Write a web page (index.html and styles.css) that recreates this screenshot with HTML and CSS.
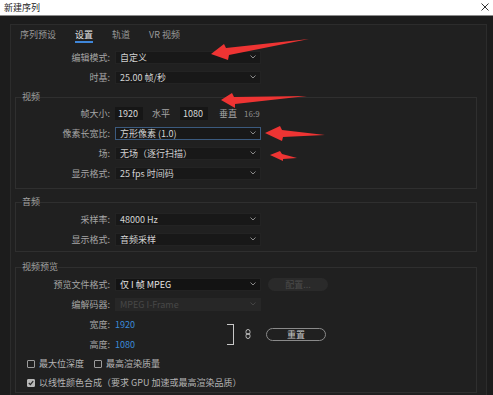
FILE: index.html
```html
<!DOCTYPE html>
<html lang="zh">
<head>
<meta charset="UTF-8">
<title>新建序列</title>
<link rel="stylesheet" href="styles.css">
</head>
<body>

<div class="titlebar">
  <span class="title">新建序列</span>
  <svg class="close" width="8" height="8" viewBox="0 0 8 8"><path d="M0.5 0.5 L7.5 7.5 M7.5 0.5 L0.5 7.5" stroke="#333" stroke-width="1" fill="none"/></svg>
</div>

<div class="dialog">
  <div class="panel">
    <div class="tabs">
      <span class="tab">序列预设</span>
      <span class="tab active">设置</span>
      <span class="tab">轨道</span>
      <span class="tab">VR 视频</span>
    </div>

    <div class="row">
      <span class="lbl">编辑模式:</span>
      <div class="select"><span>自定义</span><svg class="chev" width="6" height="4" viewBox="0 0 6 4"><path d="M0.5 0.5 L3 3 L5.5 0.5" stroke="#8a8a8a" fill="none"/></svg></div>
    </div>
    <div class="row">
      <span class="lbl">时基:</span>
      <div class="select"><span>25.00 帧/秒</span><svg class="chev" width="6" height="4" viewBox="0 0 6 4"><path d="M0.5 0.5 L3 3 L5.5 0.5" stroke="#8a8a8a" fill="none"/></svg></div>
    </div>

    <fieldset>
      <legend>视频</legend>
      <div class="row">
        <span class="lbl">帧大小:</span>
        <span class="num">1920</span>
        <span class="unit first">水平</span>
        <span class="num">1080</span>
        <span class="unit">垂直</span>
        <span class="ratio">16:9</span>
      </div>
      <div class="row">
        <span class="lbl">像素长宽比:</span>
        <div class="select focus"><span>方形像素 (1.0)</span><svg class="chev" width="6" height="4" viewBox="0 0 6 4"><path d="M0.5 0.5 L3 3 L5.5 0.5" stroke="#8a8a8a" fill="none"/></svg></div>
      </div>
      <div class="row">
        <span class="lbl">场:</span>
        <div class="select"><span>无场（逐行扫描）</span><svg class="chev" width="6" height="4" viewBox="0 0 6 4"><path d="M0.5 0.5 L3 3 L5.5 0.5" stroke="#8a8a8a" fill="none"/></svg></div>
      </div>
      <div class="row">
        <span class="lbl">显示格式:</span>
        <div class="select"><span>25 fps 时间码</span><svg class="chev" width="6" height="4" viewBox="0 0 6 4"><path d="M0.5 0.5 L3 3 L5.5 0.5" stroke="#8a8a8a" fill="none"/></svg></div>
      </div>
    </fieldset>

    <fieldset class="audio">
      <legend>音频</legend>
      <div class="row">
        <span class="lbl">采样率:</span>
        <div class="select"><span>48000 Hz</span><svg class="chev" width="6" height="4" viewBox="0 0 6 4"><path d="M0.5 0.5 L3 3 L5.5 0.5" stroke="#8a8a8a" fill="none"/></svg></div>
      </div>
      <div class="row">
        <span class="lbl">显示格式:</span>
        <div class="select"><span>音频采样</span><svg class="chev" width="6" height="4" viewBox="0 0 6 4"><path d="M0.5 0.5 L3 3 L5.5 0.5" stroke="#8a8a8a" fill="none"/></svg></div>
      </div>
    </fieldset>

    <fieldset class="preview">
      <legend>视频预览</legend>
      <div class="row">
        <span class="lbl">预览文件格式:</span>
        <div class="select dark"><span>仅 I 帧 MPEG</span><svg class="chev" width="6" height="4" viewBox="0 0 6 4"><path d="M0.5 0.5 L3 3 L5.5 0.5" stroke="#8a8a8a" fill="none"/></svg></div>
        <span class="btn disabled">配置...</span>
      </div>
      <div class="row">
        <span class="lbl">编解码器:</span>
        <div class="select disabled"><span>MPEG I-Frame</span><svg class="chev" width="6" height="4" viewBox="0 0 6 4"><path d="M0.5 0.5 L3 3 L5.5 0.5" stroke="#444" fill="none"/></svg></div>
      </div>
      <div class="size-block">
        <div class="size-col">
          <div class="row"><span class="lbl">宽度:</span><span class="blue">1920</span></div>
          <div class="row"><span class="lbl">高度:</span><span class="blue">1080</span></div>
        </div>
        <span class="bracket"></span>
        <svg class="link" width="6" height="10" viewBox="0 0 6 10"><rect x="1" y="0.5" width="4" height="5" rx="2" stroke="#bbb" fill="none"/><rect x="1" y="4.5" width="4" height="5" rx="2" stroke="#bbb" fill="none"/></svg>
        <span class="btn outline">重置</span>
      </div>
      <div class="check-row">
        <span class="check"><span class="box"></span>最大位深度</span>
        <span class="check"><span class="box"></span>最高渲染质量</span>
      </div>
      <div class="check-row">
        <span class="check"><span class="box on"><svg width="6" height="6" viewBox="0 0 6 6"><path d="M0.8 3 L2.4 4.6 L5.2 1.2" stroke="#2a2a2a" stroke-width="1.3" fill="none"/></svg></span>以线性颜色合成（要求 GPU 加速或最高渲染品质）</span>
      </div>
    </fieldset>
  </div>
</div>

<!-- red annotation arrows drawn over the dialog -->
<svg class="arrows" width="493" height="395" viewBox="0 0 493 395">
  <polygon points="211,54 224,44 226,48 309,39 229,55 228,60" fill="#ee3433"/>
  <polygon points="221,100 232,93 234,97 307,96 235,104 235,108" fill="#ee3433"/>
  <polygon points="265,133 280,126 282,130 325,135 283,137 282,141" fill="#ee3433"/>
  <polygon points="270,155 280,151 282,154 297,158 283,159 283,161" fill="#ee3433"/>
</svg>

</body>
</html>
```

FILE: styles.css
```css
body {
  margin: 0;
  width: 493px;
  height: 395px;
  overflow: hidden;
  position: relative;
  background-color: #1c1c1c;
  font-family: "Noto Sans CJK SC", "Liberation Sans", sans-serif;
  font-size: 9px;
  color: #a8a8a8;
}

.titlebar {
  height: 15px;
  background-color: #fff;
  border-bottom: 1px solid #8c8c8c;
  display: flex;
  align-items: center;
  justify-content: space-between;
  padding: 0 4px 0 4px;
  color: #222;
}

.close {
  margin-top: -2px;
}

.dialog {
  padding: 8px 6px 0 10px;
}

.panel {
  height: 380px;
  border: 1px solid #2c2c2c;
  background-color: #202020;
}

.tabs {
  display: flex;
  gap: 19px;
  height: 22px;
  box-sizing: border-box;
  padding: 4px 0 0 9px;
}

.tab {
  line-height: 11px;
  height: 12px;
  color: #9a9a9a;
}

.tab.active {
  color: #e2e2e2;
  border-bottom: 2px solid #3f86d8;
}

.row {
  display: flex;
  align-items: center;
  height: 20px;
  line-height: 11px;
}

.lbl {
  width: 104px;
  padding-right: 5px;
  box-sizing: border-box;
  text-align: right;
  color: #a5a5a5;
  flex-shrink: 0;
}

fieldset .lbl {
  width: 99px;
}

.select {
  width: 146px;
  height: 13px;
  box-sizing: border-box;
  display: flex;
  align-items: center;
  justify-content: space-between;
  padding: 0 4px;
  background-color: #181818;
  border: 1px solid #232323;
  color: #d2d2d2;
}

.select.focus {
  border-color: #3b5a7e;
}

.select.dark {
  background-color: #131313;
  color: #e4e4e4;
}

.select.disabled {
  background-color: #272727;
  border-color: #272727;
  color: #474747;
}

.num {
  width: 28px;
  height: 13px;
  box-sizing: border-box;
  padding-left: 3px;
  background-color: #161616;
  color: #d8d8d8;
  line-height: 13px;
}

.unit {
  margin: 0 10px 0 11px;
  color: #a5a5a5;
}

.unit.first {
  margin: 0 10px 0 9px;
}

.ratio {
  margin-left: -3px;
  color: #8f8f8f;
  font-size: 8px;
}

fieldset {
  margin: 5px 9px 0 4px;
  padding: 1px 0 5px 0;
  border: 1px solid #2f2f2f;
}

legend {
  padding: 0;
  margin-left: 6px;
  line-height: 10px;
  color: #a0a0a0;
}

fieldset.audio {
  margin-top: 8px;
  padding: 2px 0 2px 0;
}

fieldset.preview {
  margin-top: 10px;
  padding: 2px 0 0 0;
}

.btn {
  width: 60px;
  height: 13px;
  box-sizing: border-box;
  border-radius: 7px;
  display: flex;
  align-items: center;
  justify-content: center;
}

.btn.disabled {
  margin-left: 7px;
  background-color: #2a2a2a;
  color: #4a4a4a;
}

.btn.outline {
  border: 1px solid #8a8a8a;
  color: #c4c4c4;
}

.blue {
  color: #3b8ad8;
}

.size-block {
  display: flex;
  align-items: center;
}

.size-col {
  width: 211px;
}

.bracket {
  width: 6px;
  height: 19px;
  border: 1.5px solid #c8c8c8;
  border-left: none;
}

.link {
  margin: 0 15px 0 11px;
}

.check-row {
  display: flex;
  align-items: center;
  height: 19px;
  padding-left: 11px;
  color: #b4b4b4;
}

.check {
  display: flex;
  align-items: center;
  gap: 4px;
  margin-right: 10px;
}

.box {
  width: 8px;
  height: 8px;
  box-sizing: border-box;
  border: 1px solid #9c9c9c;
  border-radius: 1px;
  display: flex;
  align-items: center;
  justify-content: center;
}

.box.on {
  background-color: #b8b8b8;
  border-color: #b8b8b8;
}

.arrows {
  position: absolute;
  left: 0;
  top: 0;
  pointer-events: none;
}
```
